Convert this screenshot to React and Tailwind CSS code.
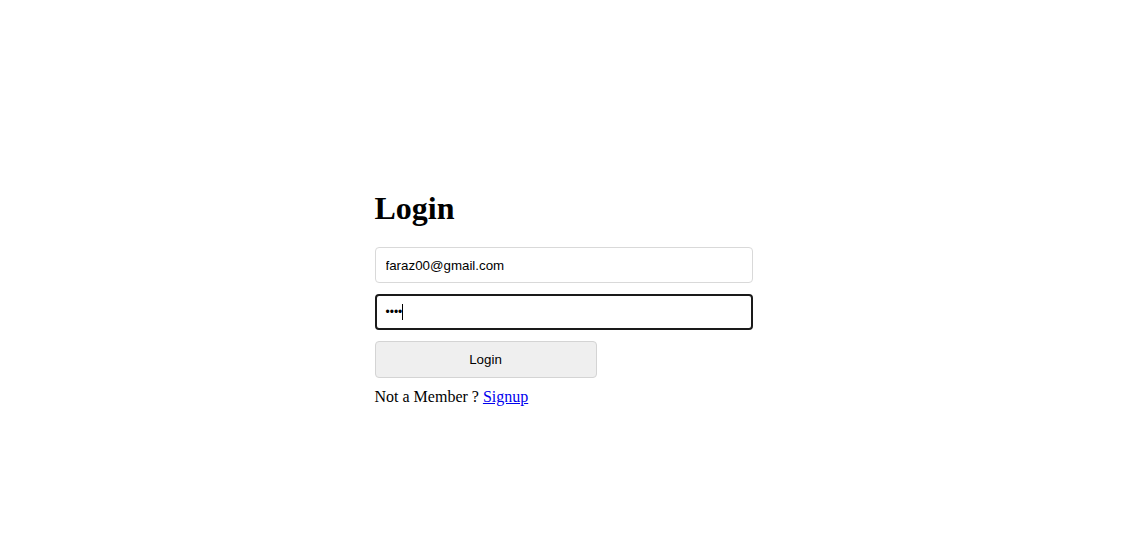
import React from "react";

const Login = () => {
  return (
    <main className="min-h-screen bg-white font-['Liberation_Serif',serif] text-black">
      <div className="flex justify-center pr-[19px] pt-[167px]">
        <div className="w-[378px]">
          <h1 className="mt-[23px] mb-[20px] text-[32px] font-bold leading-[37px]">Login</h1>

          <form className="flex flex-col gap-[11px]" onSubmit={(e) => e.preventDefault()}>
            {/* email */}
            <input
              type="email"
              defaultValue="faraz00@gmail.com"
              className="h-[36px] w-full rounded-[4px] border border-[#d9d9d9] bg-white px-[10px] font-['Liberation_Sans',Arial,sans-serif] text-[13.333px] text-black outline-none"
            />

            {/* password, shown focused */}
            <div className="flex h-[36px] w-full items-center rounded-[4px] border-2 border-[#1a1a1a] bg-white px-[9px] font-['Liberation_Sans',Arial,sans-serif] text-black">
              <span className="text-[12px] leading-none">••••</span>
              <span className="h-[16px] w-px bg-black"></span>
            </div>

            <button
              type="submit"
              className="h-[37px] w-[222px] rounded-[4px] border border-[#d4d4d4] bg-[#efefef] font-['Liberation_Sans',Arial,sans-serif] text-[13.333px] text-black"
            >
              Login
            </button>
          </form>

          <p className="mt-[10px] text-[16px] leading-[18px]">
            Not a Member ?{" "}
            <a href="#" className="text-[#0000ee] underline">
              Signup
            </a>
          </p>
        </div>
      </div>
    </main>
  );
};

export default function App() {
  return <Login />;
}
